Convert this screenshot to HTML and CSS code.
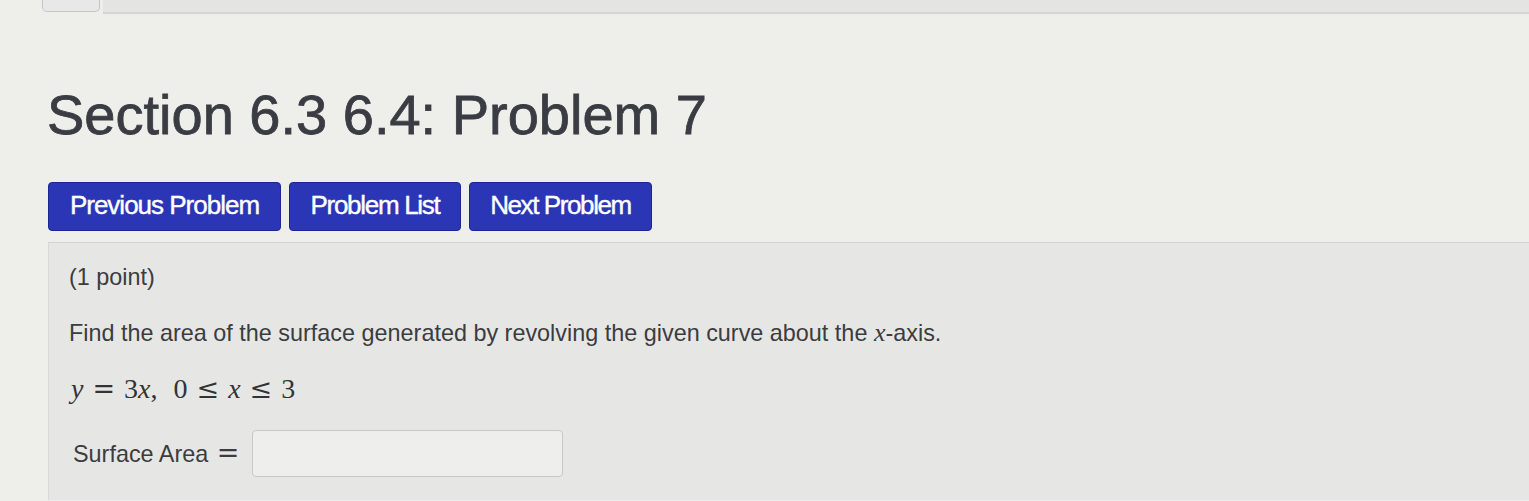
FILE: index.html
```html
<!DOCTYPE html>
<html lang="en">
<head>
<meta charset="utf-8">
<title>Section 6.3 6.4: Problem 7</title>
<link rel="stylesheet" href="styles.css">
</head>
<body>
<div class="topbar">
  <div class="tab"></div>
  <div class="bar"></div>
</div>
<main class="main">
  <h1 class="title">Section 6.3 6.4: Problem 7</h1>
  <nav class="nav">
    <a class="btn btn-prev">Previous Problem</a>
    <a class="btn btn-list">Problem List</a>
    <a class="btn btn-next">Next Problem</a>
  </nav>
  <section class="panel">
    <p class="line points">(1 point)</p>
    <p class="line">Find the area of the surface generated by revolving the given curve about the <i class="mi">x</i>-axis.</p>
    <p class="math"><i>y</i><span class="rel">=</span>3<i>x</i><span class="comma">,</span>0<span class="rel">≤</span><i>x</i><span class="rel">≤</span>3</p>
    <div class="answer">
      <span class="label">Surface Area <span class="eq">=</span></span>
      <span class="input"></span>
    </div>
  </section>
</main>
</body>
</html>
```

FILE: styles.css
```css
html, body {
  margin: 0;
  padding: 0;
}
body {
  background: #eeeeeb;
  font-family: "Liberation Sans", Arial, sans-serif;
  color: #3a3a3c;
  overflow: hidden;
  height: 501px;
}
.topbar {
  display: flex;
  height: 14px;
  align-items: flex-start;
}
.tab {
  margin-left: 42px;
  width: 56px;
  height: 11px;
  background: #e7e8e7;
  border: 1px solid #c6c7c5;
  border-top: none;
  border-radius: 0 0 5px 5px;
}
.bar {
  flex: 1;
  height: 12px;
  margin-left: 3px;
  background: #e4e5e3;
  border-bottom: 2px solid #d5d6d4;
}
.main {
  padding-left: 47px;
}
.title {
  margin: 69px 0 0 0;
  font-size: 56px;
  line-height: 64px;
  font-weight: normal;
  color: #3b3b43;
  -webkit-text-stroke: 0.8px #3b3b43;
  letter-spacing: 0;
}
.nav {
  display: flex;
  gap: 8px;
  margin-top: 35px;
  padding-left: 1px;
}
.btn {
  display: block;
  box-sizing: border-box;
  height: 49px;
  line-height: 45px;
  padding: 0 0 2px;
  text-align: center;
  background: #2a36b5;
  border: 1px solid #1d268f;
  border-radius: 4px;
  color: #ffffff;
  font-size: 26px;
  letter-spacing: -1px;
  -webkit-text-stroke: 0.4px #ffffff;
}
.btn-prev { width: 233px; }
.btn-list { width: 172px; letter-spacing: -1.3px; }
.btn-next { width: 183px; letter-spacing: -1.4px; }
.panel {
  box-sizing: border-box;
  height: 258px;
  margin-top: 11px;
  margin-left: 1px;
  background: #e6e7e5;
  border-top: 1px solid #d3d4d1;
  border-left: 1px solid #d9dad7;
  padding: 17px 0 0 20px;
  font-size: 23.4px;
  color: #3c3c3e;
}
.line {
  margin: 0;
  line-height: 34px;
}
.points {
  margin-bottom: 22px;
}
.mi {
  font-family: "Liberation Serif", "Times New Roman", serif;
  font-size: 26px;
}
.math {
  margin: 22px 0 0 2px;
  line-height: 34px;
  font-family: "Liberation Serif", "Times New Roman", serif;
  font-size: 28px;
  color: #333336;
}
.rel {
  font-family: "DejaVu Serif", serif;
  font-size: 27px;
  margin: 0 9px;
}
.comma {
  margin-right: 16px;
}
.answer {
  display: flex;
  align-items: center;
  margin-top: 24px;
  padding-left: 4px;
}
.label {
  line-height: 34px;
  font-size: 23.4px;
}
.eq {
  font-family: "DejaVu Serif", serif;
  font-size: 27px;
  margin-left: 2px;
}
.input {
  display: block;
  box-sizing: border-box;
  width: 311px;
  height: 47px;
  margin-left: 13px;
  background: #eeefed;
  border: 1px solid #c8c9c6;
  border-radius: 4px;
}
```
